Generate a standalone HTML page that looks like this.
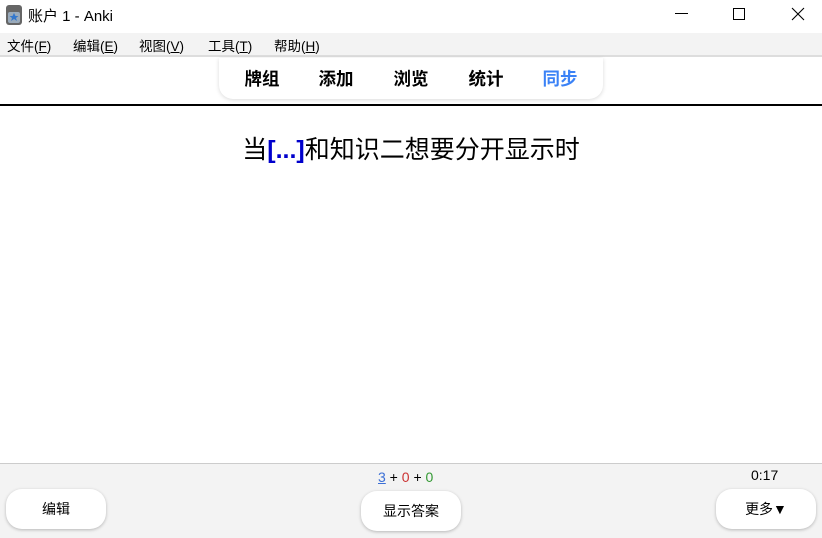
<!DOCTYPE html>
<html><head><meta charset="utf-8"><style>
*{margin:0;padding:0;box-sizing:border-box}
body{width:822px;height:538px;overflow:hidden;background:#fff;font-family:"Liberation Sans","Noto Sans CJK SC",sans-serif;position:relative;color:#000}
.abs{position:absolute}
#title{left:0;top:0;width:822px;height:33px;background:#fff}
#menu{left:0;top:33px;width:822px;height:24px;background:#f3f3f3;border-bottom:2px solid #ddd;font-size:13.5px}
#menu span{position:absolute;top:2px}
#pill{left:219px;top:58px;width:384px;height:41px;background:#fff;border-radius:0 0 14px 14px;box-shadow:0 1px 4px rgba(0,0,0,.15)}
.nav{top:66px;font-size:17.5px;font-weight:bold;transform:translateX(-50%)}
#hr{left:0;top:104px;width:822px;height:1.5px;background:#000}
#q{left:0;top:130px;width:822px;text-align:center;font-size:25px}
#bot{left:0;top:463px;width:822px;height:75px;background:#f3f3f3;border-top:1px solid #ccc}
.btn{background:#fff;border-radius:16px;box-shadow:0 1px 3px rgba(0,0,0,.25);font-size:14px;text-align:center;line-height:40px;height:40px;width:100px}
</style></head><body>
<div id="title" class="abs">
<svg class="abs" style="left:6px;top:5px" width="16" height="20"><rect x="0" y="0" width="16" height="20" rx="3" fill="#666"/><rect x="2" y="7" width="12" height="11" rx="2" fill="#9ab"/><polygon points="8,8 9.5,11 12.5,11 10,13 11,16 8,14 5,16 6,13 3.5,11 6.5,11" fill="#37c"/></svg>
<span class="abs" style="left:28px;top:5px;font-size:15px">账户 1 - Anki</span>
<div class="abs" style="left:675px;top:13px;width:13px;height:1px;background:#000"></div>
<div class="abs" style="left:733px;top:8px;width:12px;height:12px;border:1px solid #000"></div>
<svg class="abs" style="left:791px;top:7px" width="14" height="14"><path d="M1 1L13 13M13 1L1 13" stroke="#000" stroke-width="1.1"/></svg>
</div>
<div id="menu" class="abs">
<span style="left:7px">文件(<u>F</u>)</span>
<span style="left:73px">编辑(<u>E</u>)</span>
<span style="left:139px">视图(<u>V</u>)</span>
<span style="left:208px">工具(<u>T</u>)</span>
<span style="left:274px">帮助(<u>H</u>)</span>
</div>
<div id="pill" class="abs"></div>
<span class="abs nav" style="left:262px">牌组</span>
<span class="abs nav" style="left:336px">添加</span>
<span class="abs nav" style="left:411px">浏览</span>
<span class="abs nav" style="left:486px">统计</span>
<span class="abs nav" style="left:560px;color:#3b82f6">同步</span>
<div id="hr" class="abs"></div>
<div id="q" class="abs">当<b style="color:#0000cc">[...]</b>和知识二想要分开显示时</div>
<div id="bot" class="abs"></div>
<div class="abs" style="left:378px;top:469px;font-size:14px"><u style="color:#3b6fd6">3</u> + <span style="color:#c33">0</span> + <span style="color:#393">0</span></div>
<div class="abs" style="left:751px;top:467px;font-size:14px">0:17</div>
<div class="abs btn" style="left:6px;top:489px">编辑</div>
<div class="abs btn" style="left:361px;top:491px">显示答案</div>
<div class="abs btn" style="left:716px;top:489px">更多▼</div>
</body></html>
